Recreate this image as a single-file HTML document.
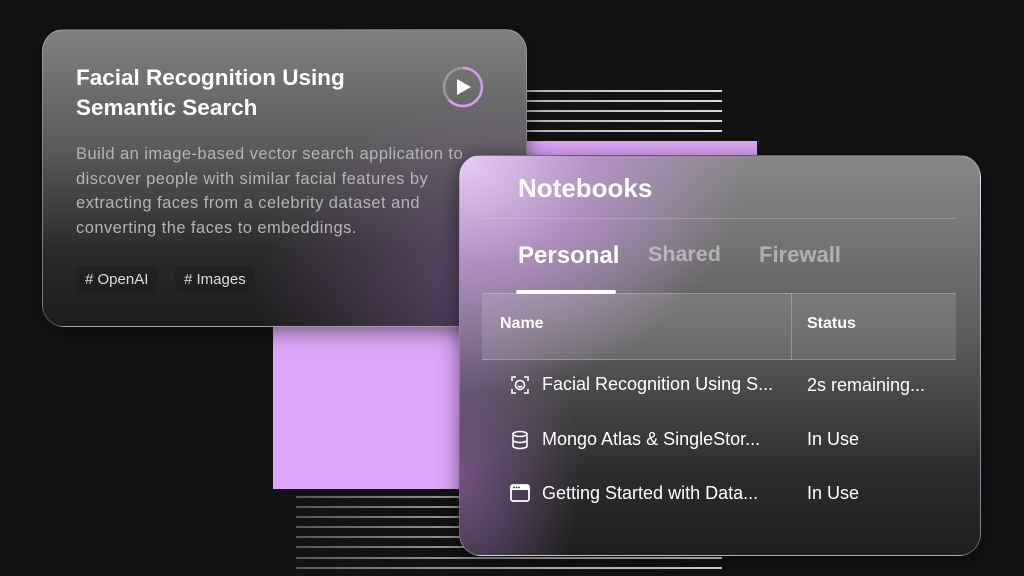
<!DOCTYPE html>
<html><head><meta charset="utf-8"><style>
*{margin:0;padding:0;box-sizing:border-box}
body{width:1024px;height:576px;background:#131313;position:relative;overflow:hidden;font-family:"Liberation Sans",sans-serif}
.ln{position:absolute;height:2px;background:linear-gradient(90deg,#555,#bbb 60%,#ddd)}
.purple{position:absolute;left:273px;top:141px;width:484px;height:348px;background:#dda6f8}
.card1{position:absolute;left:42px;top:29px;width:485px;height:298px;border-radius:22px;
background:radial-gradient(ellipse 260px 200px at 470px 260px,rgba(170,120,200,.45),rgba(0,0,0,0)),linear-gradient(180deg,#808080 0%,#5a5a5a 40%,#2a2a2a 75%,#1c1c1c 100%);
border:1px solid rgba(255,255,255,.25);box-shadow:0 4px 20px rgba(0,0,0,.5)}
.t1{position:absolute;left:33px;top:33px;color:#fff;font-size:22.5px;line-height:30px;font-weight:bold}
.d1{position:absolute;left:33px;top:112px;white-space:nowrap;color:#b5b5b5;font-size:16.5px;line-height:24.5px;letter-spacing:.45px}
.tag{position:absolute;top:236px;height:28px;line-height:28px;padding:0 9px;border-radius:5px;background:rgba(30,30,30,.55);color:#ddd;font-size:15px}
.card2{position:absolute;left:459px;top:155px;width:522px;height:401px;border-radius:22px;
background:radial-gradient(ellipse 380px 320px at 0px 0px,rgba(232,205,245,1) 0%,rgba(190,150,210,.8) 35%,rgba(120,100,130,0) 75%),radial-gradient(ellipse 120px 200px at 0px 320px,rgba(140,100,160,.7),rgba(0,0,0,0)),linear-gradient(180deg,#888 0%,#5c5c5c 45%,#2c2c2c 80%,#1e1e1e 100%);
border:1px solid rgba(255,255,255,.3);box-shadow:0 4px 20px rgba(0,0,0,.5);color:#fff}
.abs{position:absolute}
</style></head><body>
<div class="ln" style="left:296px;width:426px;top:90px"></div>
<div class="ln" style="left:296px;width:426px;top:100px"></div>
<div class="ln" style="left:296px;width:426px;top:110px"></div>
<div class="ln" style="left:296px;width:426px;top:120px"></div>
<div class="ln" style="left:296px;width:426px;top:130px"></div>
<div class="purple"></div>
<div class="ln" style="left:296px;width:426px;top:496px"></div>
<div class="ln" style="left:296px;width:426px;top:506px"></div>
<div class="ln" style="left:296px;width:426px;top:516px"></div>
<div class="ln" style="left:296px;width:426px;top:526px"></div>
<div class="ln" style="left:296px;width:426px;top:536px"></div>
<div class="ln" style="left:296px;width:426px;top:546px"></div>
<div class="ln" style="left:296px;width:426px;top:557px"></div>
<div class="ln" style="left:296px;width:426px;top:567px"></div>

<div class="card1">
<div class="t1">Facial Recognition Using<br>Semantic Search</div>
<svg class="abs" style="left:398px;top:35px" width="44" height="44" viewBox="0 0 44 44">
<circle cx="22" cy="22" r="19" fill="none" stroke="#9a9a9a" stroke-width="2.5"/>
<path d="M22 3 A19 19 0 1 1 8 35" fill="none" stroke="#d79af5" stroke-width="2.5"/>
<path d="M16 14 L30 22 L16 30 Z" fill="#fff"/></svg>
<div class="d1">Build an image-based vector search application to<br>discover people with similar facial features by<br>extracting faces from a celebrity dataset and<br>converting the faces to embeddings.</div>
<div class="tag" style="left:33px"># OpenAI</div>
<div class="tag" style="left:132px"># Images</div>
</div>

<div class="card2">
<div class="abs" style="left:58px;top:17px;font-size:26px;font-weight:bold">Notebooks</div>
<div class="abs" style="left:22px;top:62px;width:474px;height:1px;background:rgba(255,255,255,.2)"></div>
<div class="abs" style="left:58px;top:86px;font-size:24px;font-weight:bold">Personal</div>
<div class="abs" style="left:188px;top:86px;font-size:21.5px;font-weight:bold;color:rgba(255,255,255,.45)">Shared</div>
<div class="abs" style="left:299px;top:86px;font-size:22px;font-weight:bold;color:rgba(255,255,255,.45)">Firewall</div>
<div class="abs" style="left:56px;top:134px;width:100px;height:4px;background:#fff;border-radius:2px"></div>
<div class="abs" style="left:22px;top:137px;width:474px;height:67px;background:rgba(255,255,255,.13);border-top:1px solid rgba(255,255,255,.2);border-bottom:1px solid rgba(255,255,255,.25)"></div>
<div class="abs" style="left:331px;top:137px;width:1px;height:67px;background:rgba(255,255,255,.25)"></div>
<div class="abs" style="left:40px;top:159px;font-size:16px;font-weight:bold">Name</div>
<div class="abs" style="left:347px;top:159px;font-size:16px;font-weight:bold">Status</div>
<svg class="abs" style="left:50px;top:219px" width="20" height="20" viewBox="0 0 20 20" fill="none" stroke="#fff" stroke-width="1.6"><path d="M2 6V2h4M14 2h4v4M18 14v4h-4M6 18H2v-4"/><circle cx="10" cy="10" r="4.5"/><path d="M8 11q2 2 4 0"/></svg>
<div class="abs" style="left:82px;top:218px;font-size:18px">Facial Recognition Using S...</div>
<div class="abs" style="left:347px;top:219px;font-size:18px">2s remaining...</div>
<svg class="abs" style="left:50px;top:274px" width="20" height="20" viewBox="0 0 20 20" fill="none" stroke="#fff" stroke-width="1.6"><ellipse cx="10" cy="4" rx="7" ry="2.5"/><path d="M3 4v12c0 1.4 3 2.5 7 2.5s7-1.1 7-2.5V4M3 10c0 1.4 3 2.5 7 2.5s7-1.1 7-2.5"/></svg>
<div class="abs" style="left:82px;top:273px;font-size:18px">Mongo Atlas &amp; SingleStor...</div>
<div class="abs" style="left:347px;top:273px;font-size:18px">In Use</div>
<svg class="abs" style="left:50px;top:328px" width="20" height="18" viewBox="0 0 20 18"><rect x="1" y="1" width="18" height="16" rx="2" fill="none" stroke="#fff" stroke-width="1.8"/><rect x="1" y="1" width="18" height="5" fill="#fff"/><circle cx="4" cy="3.5" r=".9" fill="#333"/><circle cx="6.5" cy="3.5" r=".9" fill="#333"/><circle cx="9" cy="3.5" r=".9" fill="#333"/></svg>
<div class="abs" style="left:82px;top:327px;font-size:18px">Getting Started with Data...</div>
<div class="abs" style="left:347px;top:327px;font-size:18px">In Use</div>
</div>
</body></html>
